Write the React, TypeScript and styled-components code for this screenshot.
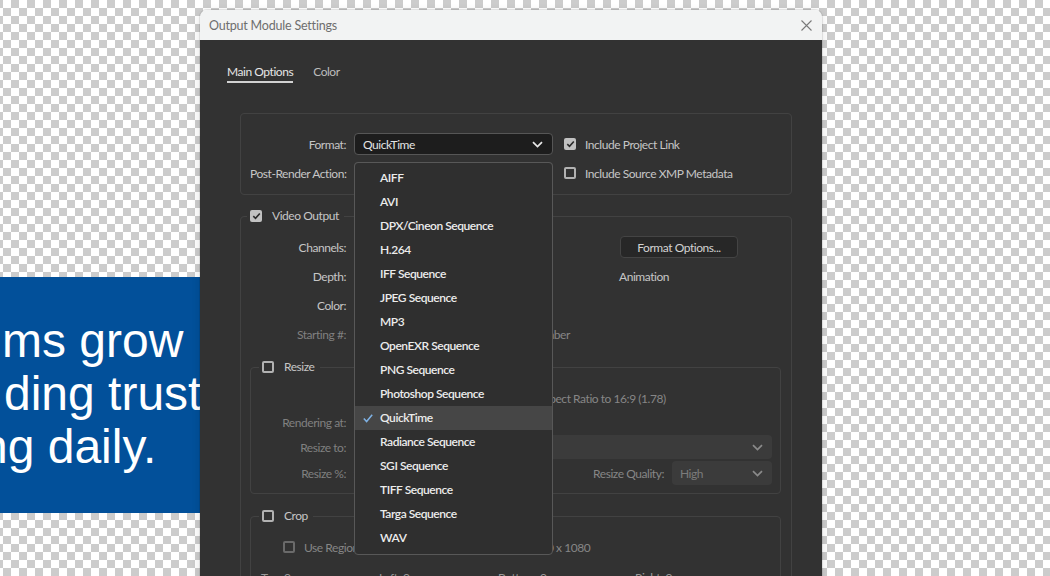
import React from 'react';
import styled, { createGlobalStyle } from 'styled-components';

const GlobalStyle = createGlobalStyle`
  html, body { margin: 0; padding: 0; }
  body {
    background: repeating-conic-gradient(#cccccc 0 25%, #ffffff 0 50%) 3px 0 / 16px 16px;
    font-family: Lato, "Noto Sans", sans-serif;
  }
`;

const Desktop = styled.div`
  position: relative;
  width: 1050px;
  height: 576px;
  overflow: hidden;
`;

const Banner = styled.div`
  position: absolute;
  left: 0;
  top: 277px;
  width: 230px;
  height: 236px;
  background: #02509a;
  overflow: hidden;
  padding-top: 37px;
  box-sizing: border-box;
`;

const BannerLine = styled.div<{ $shift: number }>`
  font-family: "Liberation Sans", Arial, sans-serif;
  font-size: 48px;
  line-height: 53px;
  color: #ffffff;
  white-space: nowrap;
  margin-left: ${p => p.$shift}px;
`;

const Dialog = styled.div`
  position: absolute;
  left: 200px;
  top: 10px;
  width: 622px;
  height: 580px;
  border-radius: 7px 7px 0 0;
  overflow: hidden;
  box-shadow: 0 0 0 1px rgba(0, 0, 0, 0.08), 0 2px 10px rgba(0, 0, 0, 0.12);
  display: flex;
  flex-direction: column;
`;

const TitleBar = styled.div`
  height: 30px;
  flex: none;
  background: #f2f3f3;
  display: flex;
  align-items: center;
  justify-content: space-between;
  padding: 0 10px 0 9px;
  color: #6e6e6e;
  font-size: 12.5px;
  letter-spacing: -0.2px;
`;

const Body = styled.div`
  flex: 1;
  background: #323232;
  padding: 24px 30px 0 27px;
  color: #c6c6c6;
  font-size: 12px;
  letter-spacing: -0.45px;
`;

const Tabs = styled.div`
  display: flex;
  gap: 20px;
`;

const Tab = styled.div<{ $active?: boolean }>`
  line-height: 16px;
  padding-bottom: 1px;
  border-bottom: 2px solid ${p => (p.$active ? '#d2d2d2' : 'transparent')};
  color: ${p => (p.$active ? '#e6e6e6' : '#bcbcbc')};
`;

const Content = styled.div`
  margin: 30px 0 0 13px;
`;

const FormatGroup = styled.div`
  border: 1px solid #424242;
  border-radius: 4px;
  padding: 19px 0 10px 9px;
  display: flex;
  flex-direction: column;
  gap: 7px;
`;

const Row = styled.div<{ $h?: number; $indent?: number }>`
  display: flex;
  align-items: center;
  height: ${p => p.$h ?? 22}px;
  padding-left: ${p => p.$indent ?? 0}px;
  white-space: nowrap;
`;

const Label = styled.div<{ $w: number; $dim?: boolean }>`
  width: ${p => p.$w}px;
  flex: none;
  text-align: right;
  margin-right: 8px;
  color: ${p => (p.$dim ? '#808080' : '#c6c6c6')};
`;

const SelectWrap = styled.div`
  position: relative;
  flex: none;
`;

const Select = styled.div<{ $w?: number; $tone?: 'dark' | 'flat' }>`
  box-sizing: border-box;
  width: ${p => (p.$w ? `${p.$w}px` : 'auto')};
  flex: ${p => (p.$w ? 'none' : '1')};
  height: ${p => (p.$tone === 'flat' ? 24 : 22)}px;
  border-radius: 4px;
  padding: 0 9px 0 8px;
  display: flex;
  align-items: center;
  justify-content: space-between;
  background: ${p => (p.$tone === 'flat' ? '#3b3b3b' : '#1d1d1d')};
  border: ${p => (p.$tone === 'flat' ? 'none' : '1px solid #565656')};
  color: ${p => (p.$tone === 'flat' ? '#7c7c7c' : '#e4e4e4')};
`;

const Menu = styled.div`
  position: absolute;
  left: 0;
  top: calc(100% + 7px);
  width: 199px;
  box-sizing: border-box;
  background: #2f2f2f;
  border: 1px solid #585858;
  border-radius: 4px;
  padding: 3px 0 4px;
  z-index: 10;
`;

const MenuItem = styled.div<{ $selected?: boolean }>`
  position: relative;
  height: 24px;
  line-height: 24px;
  padding-left: 25px;
  font-weight: 600;
  color: #ececec;
  background: ${p => (p.$selected ? '#464646' : 'transparent')};
`;

const Tick = styled.svg`
  position: absolute;
  left: 8px;
  top: 8px;
`;

const CheckField = styled.label<{ $dim?: boolean }>`
  display: flex;
  align-items: center;
  gap: 9px;
  color: ${p => (p.$dim ? '#868686' : '#c6c6c6')};
`;

const Box = styled.span<{ $on?: boolean; $dim?: boolean }>`
  width: 12px;
  height: 12px;
  box-sizing: border-box;
  border-radius: 2px;
  flex: none;
  display: inline-flex;
  align-items: center;
  justify-content: center;
  background: ${p => (p.$on ? '#c2c2c2' : 'transparent')};
  border: ${p => (p.$on ? 'none' : `2px solid ${p.$dim ? '#6a6a6a' : '#b2b2b2'}`)};
`;

const Spacer = styled.div<{ $w: number }>`
  width: ${p => p.$w}px;
  flex: none;
`;

const Fieldset = styled.fieldset<{ $pl: number; $pr: number; $mt: number; $pb?: number }>`
  margin: ${p => p.$mt}px 0 0;
  border: 1px solid #424242;
  border-radius: 4px;
  padding: 12px ${p => p.$pr}px ${p => p.$pb ?? 0}px ${p => p.$pl}px;
  min-width: 0;
`;

const Legend = styled.legend`
  padding: 0 5px 0 3px;
  height: 16px;
  line-height: 16px;
  display: flex;
  align-items: center;
  gap: 10px;
  color: #c6c6c6;
`;

const Stack = styled.div<{ $gap: number; $pl?: number }>`
  display: flex;
  flex-direction: column;
  gap: ${p => p.$gap}px;
  padding-left: ${p => p.$pl ?? 0}px;
`;

const Button = styled.div`
  width: 118px;
  height: 22px;
  box-sizing: border-box;
  border: 1px solid #444444;
  border-radius: 4px;
  background: #272727;
  color: #d2d2d2;
  display: flex;
  align-items: center;
  justify-content: center;
  margin-left: 67px;
`;

const Aside = styled.div<{ $ml: number; $dim?: boolean }>`
  margin-left: ${p => p.$ml}px;
  color: ${p => (p.$dim ? '#868686' : '#c6c6c6')};
`;

const NumberBox = styled.div<{ $w: number }>`
  width: ${p => p.$w}px;
  height: 22px;
  box-sizing: border-box;
  border-radius: 4px;
  background: #1d1d1d;
  border: 1px solid #4a4a4a;
  color: #808080;
  padding-left: 6px;
  line-height: 20px;
  margin-right: 10px;
  flex: none;
`;

const RightGroup = styled.div`
  margin-left: auto;
  display: flex;
  align-items: center;
  gap: 8px;
  color: #868686;
`;

const Offsets = styled.div`
  display: flex;
  margin-top: 12px;
  padding-left: 2px;
  color: #9a9a9a;
`;

const Offset = styled.div<{ $w: number }>`
  width: ${p => p.$w}px;
  flex: none;
`;

const Chevron = ({ color }: { color: string }) => (
  <svg width="11" height="7" viewBox="0 0 11 7">
    <path d="M1 1.2 L5.5 5.6 L10 1.2" fill="none" stroke={color} strokeWidth="1.7" />
  </svg>
);

const Check = () => (
  <svg width="9" height="8" viewBox="0 0 9 8">
    <path d="M1.3 4.2 L3.5 6.3 L7.8 1.5" fill="none" stroke="#2b2b2b" strokeWidth="1.6" />
  </svg>
);

const CheckBox = ({ on, dim }: { on?: boolean; dim?: boolean }) => (
  <Box $on={on} $dim={dim}>{on && <Check />}</Box>
);

const formats = [
  'AIFF', 'AVI', 'DPX/Cineon Sequence', 'H.264', 'IFF Sequence', 'JPEG Sequence', 'MP3',
  'OpenEXR Sequence', 'PNG Sequence', 'Photoshop Sequence', 'QuickTime', 'Radiance Sequence',
  'SGI Sequence', 'TIFF Sequence', 'Targa Sequence', 'WAV',
];

export default function App() {
  return (
    <>
      <GlobalStyle />
      <Desktop>
        <Banner>
          <BannerLine $shift={2}>ms grow</BannerLine>
          <BannerLine $shift={4}>ding trust</BannerLine>
          <BannerLine $shift={-19}>ng daily.</BannerLine>
        </Banner>

        <Dialog>
          <TitleBar>
            <span>Output Module Settings</span>
            <svg width="11" height="11" viewBox="0 0 11 11">
              <path d="M0.5 0.5 L10.5 10.5 M10.5 0.5 L0.5 10.5" stroke="#7a7a7a" strokeWidth="1.1" />
            </svg>
          </TitleBar>

          <Body>
            <Tabs>
              <Tab $active>Main Options</Tab>
              <Tab>Color</Tab>
            </Tabs>

            <Content>
              <FormatGroup>
                <Row>
                  <Label $w={96}>Format:</Label>
                  <SelectWrap>
                    <Select $w={199}>
                      <span>QuickTime</span>
                      <Chevron color="#e8e8e8" />
                    </Select>
                    <Menu>
                      {formats.map(f => (
                        <MenuItem key={f} $selected={f === 'QuickTime'}>
                          {f === 'QuickTime' && (
                            <Tick width="10" height="9" viewBox="0 0 10 9">
                              <path d="M0.8 4.6 L3.6 7.6 L9.2 0.8" fill="none" stroke="#7fb2e5" strokeWidth="1.5" />
                            </Tick>
                          )}
                          {f}
                        </MenuItem>
                      ))}
                    </Menu>
                  </SelectWrap>
                  <Spacer $w={11} />
                  <CheckField>
                    <CheckBox on />
                    Include Project Link
                  </CheckField>
                </Row>
                <Row>
                  <Label $w={96}>Post-Render Action:</Label>
                  <Select $w={199}>
                    <span>None</span>
                    <Chevron color="#e8e8e8" />
                  </Select>
                  <Spacer $w={11} />
                  <CheckField>
                    <CheckBox />
                    Include Source XMP Metadata
                  </CheckField>
                </Row>
              </FormatGroup>

              <Fieldset $mt={13} $pl={6} $pr={10}>
                <Legend>
                  <CheckBox on />
                  Video Output
                </Legend>
                <Stack $gap={0} $pl={3}>
                  <Stack $gap={7}>
                    <Row>
                      <Label $w={96}>Channels:</Label>
                      <Select $w={199}>
                        <span>RGB</span>
                        <Chevron color="#e8e8e8" />
                      </Select>
                      <Button>Format Options...</Button>
                    </Row>
                    <Row>
                      <Label $w={96}>Depth:</Label>
                      <Select $w={199}>
                        <span>Millions of Colors</span>
                        <Chevron color="#e8e8e8" />
                      </Select>
                      <Aside $ml={66}>Animation</Aside>
                    </Row>
                    <Row>
                      <Label $w={96}>Color:</Label>
                      <Select $w={199}>
                        <span>Premultiplied (Matted)</span>
                        <Chevron color="#e8e8e8" />
                      </Select>
                    </Row>
                    <Row>
                      <Label $w={96} $dim>Starting #:</Label>
                      <NumberBox $w={58}>0</NumberBox>
                      <CheckField $dim>
                        <CheckBox on />
                        Use Comp Frame Number
                      </CheckField>
                    </Row>
                  </Stack>

                  <Fieldset $mt={14} $pl={8} $pr={8} $pb={8}>
                    <Legend>
                      <CheckBox />
                      Resize
                    </Legend>
                    <Stack $gap={2}>
                      <Row $indent={232}>
                        <CheckField $dim>
                          <CheckBox on dim />
                          Lock Aspect Ratio to 16:9 (1.78)
                        </CheckField>
                      </Row>
                      <Row>
                        <Label $w={87} $dim>Rendering at:</Label>
                        <Aside $ml={0} $dim>1920 x 1080</Aside>
                      </Row>
                      <Row $h={24}>
                        <Label $w={87} $dim>Resize to:</Label>
                        <Select $tone="flat">
                          <span>1920 x 1080</span>
                          <Chevron color="#8a8a8a" />
                        </Select>
                      </Row>
                      <Row $h={24}>
                        <Label $w={87} $dim>Resize %:</Label>
                        <Aside $ml={0} $dim>x</Aside>
                        <RightGroup>
                          Resize Quality:
                          <Select $tone="flat" $w={100}>
                            <span>High</span>
                            <Chevron color="#8a8a8a" />
                          </Select>
                        </RightGroup>
                      </Row>
                    </Stack>
                  </Fieldset>

                  <Fieldset $mt={14} $pl={8} $pr={8}>
                    <Legend>
                      <CheckBox />
                      Crop
                    </Legend>
                    <Row $indent={24}>
                      <CheckField $dim>
                        <CheckBox dim />
                        Use Region of Interest
                      </CheckField>
                      <Aside $ml={67} $dim>Final Size: 1920 x 1080</Aside>
                    </Row>
                    <Offsets>
                      <Offset $w={118}>Top: 0</Offset>
                      <Offset $w={119}>Left: 0</Offset>
                      <Offset $w={137}>Bottom: 0</Offset>
                      <Offset $w={100}>Right: 0</Offset>
                    </Offsets>
                  </Fieldset>
                </Stack>
              </Fieldset>
            </Content>
          </Body>
        </Dialog>
      </Desktop>
    </>
  );
}
